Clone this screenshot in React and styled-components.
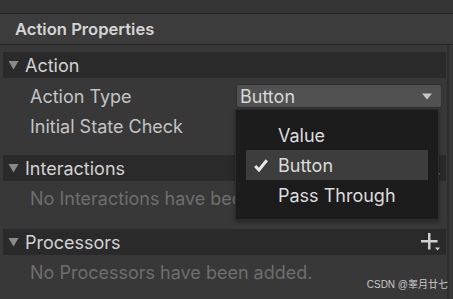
import React from 'react';
import styled, { createGlobalStyle } from 'styled-components';

const GlobalStyle = createGlobalStyle`
  html, body {
    margin: 0;
    padding: 0;
    background: #383838;
    width: 453px;
    height: 299px;
    overflow: hidden;
  }
  body {
    font-family: Inter, "Noto Sans", sans-serif;
  }
`

const Page = styled.div`
  position: relative;
  width: 453px;
  height: 299px;
  background: #383838;
  overflow: hidden;
`

const TopStrip = styled.div`
  height: 13px;
  background: #353535;
  border-bottom: 1px solid #232323;
`

const Title = styled.div`
  height: 30px;
  display: flex;
  align-items: center;
  padding-left: 15px;
  background: #3c3c3c;
  border-bottom: 1px solid #242424;
  color: #d4d4d4;
  font-size: 16.6px;
  font-weight: 600;
`

const Body = styled.div`
  display: flex;
  flex-direction: column;
  padding: 7px 0 0 3px;
  margin-right: 4px;
  border-right: 2px solid #2e2e2e;
  height: 260px;
  box-sizing: border-box;
`

const Foldout = styled.div`
  display: flex;
  flex-direction: column;
  margin-top: ${p => p.$gap || 0}px;
`

const FoldHeader = styled.div`
  height: 26px;
  width: 443px;
  display: flex;
  align-items: center;
  gap: 6px;
  padding-left: 5px;
  box-sizing: border-box;
  background: #2a2a2a;
  color: #d2d2d2;
  font-size: 18px;
`

const HeaderLabel = styled.span`
  flex: 1;
`

const Row = styled.div`
  height: 30px;
  display: flex;
  align-items: center;
  padding-left: 27px;
  color: #c4c4c4;
  font-size: 18px;
`

const Rows = styled.div`
  display: flex;
  flex-direction: column;
  padding-top: 3px;
`

const Label = styled.span`
  width: 206px;
`

const Empty = styled.div`
  height: 30px;
  margin-top: 2px;
  display: flex;
  align-items: center;
  padding-left: 27px;
  color: #6e6e6e;
  font-size: 18px;
`

const Field = styled.div`
  width: 206px;
  height: 24px;
  display: flex;
  align-items: center;
  justify-content: space-between;
  padding: 0 9px 0 3px;
  box-sizing: border-box;
  background: #515151;
  border: 1px solid #303030;
  border-radius: 3px;
  color: #d8d8d8;
  font-size: 18px;
`

const StubField = styled.div`
  width: 3px;
  height: 24px;
  background: #474747;
`

const AddButton = styled.div`
  position: relative;
  width: 20px;
  height: 20px;
  margin-right: 6px;
`

const Menu = styled.div`
  position: absolute;
  left: 235px;
  top: 109px;
  width: 204px;
  height: 111px;
  box-sizing: border-box;
  padding: 10px 10px 0 10px;
  background: #1c1c1c;
  border: 1px solid #2c2c2c;
  box-shadow: 0 2px 4px rgba(0, 0, 0, 0.35);
`

const MenuItem = styled.div`
  height: 30px;
  display: flex;
  align-items: center;
  padding-left: 8px;
  gap: 10px;
  background: ${p => (p.$selected ? '#3d3d3d' : 'transparent')};
  color: #dcdcdc;
  font-size: 18px;
`

const Check = styled.span`
  width: 14px;
  display: flex;
  align-items: center;
`

const Watermark = styled.div`
  position: absolute;
  right: 5px;
  bottom: 8px;
  color: #c9c9c9;
  font-size: 10px;
  font-family: "Liberation Sans", "Noto Sans CJK SC", sans-serif;
`

const Triangle = () => (
  <svg width="11" height="10" viewBox="0 0 11 10">
    <path d="M0.5 1 L10.5 1 L5.5 9.5 Z" fill="#8a8a8a" />
  </svg>
)

const Arrow = () => (
  <svg width="10" height="7" viewBox="0 0 10 7">
    <path d="M0 0.5 L10 0.5 L5 6.5 Z" fill="#c8c8c8" />
  </svg>
)

const Plus = () => (
  <AddButton>
    <svg width="20" height="20" viewBox="0 0 20 20">
      <path d="M8 1 H10.5 V8 H17.5 V10.5 H10.5 V17.5 H8 V10.5 H1 V8 H8 Z" fill="#cfcfcf" />
      <path d="M15 15.5 H20 L17.5 18.5 Z" fill="#cfcfcf" />
    </svg>
  </AddButton>
)

const Tick = () => (
  <svg width="14" height="13" viewBox="0 0 14 13">
    <path d="M1.2 7 L5 11 L12.8 1.2" fill="none" stroke="#e8e8e8" strokeWidth="3" />
  </svg>
)

const App = () => {
  const options = ['Value', 'Button', 'Pass Through'];
  return (
    <Page>
      <GlobalStyle />
      <TopStrip />
      <Title>Action Properties</Title>
      <Body>
        <Foldout>
          <FoldHeader>
            <Triangle />
            <HeaderLabel>Action</HeaderLabel>
          </FoldHeader>
          <Rows>
            <Row>
              <Label>Action Type</Label>
              <Field>
                <span>Button</span>
                <Arrow />
              </Field>
            </Row>
            <Row>
              <Label>Initial State Check</Label>
              <StubField />
            </Row>
          </Rows>
        </Foldout>
        <Foldout $gap={14}>
          <FoldHeader>
            <Triangle />
            <HeaderLabel>Interactions</HeaderLabel>
            <Plus />
          </FoldHeader>
          <Empty>No Interactions have been added.</Empty>
        </Foldout>
        <Foldout $gap={16}>
          <FoldHeader>
            <Triangle />
            <HeaderLabel>Processors</HeaderLabel>
            <Plus />
          </FoldHeader>
          <Empty>No Processors have been added.</Empty>
        </Foldout>
      </Body>
      <Menu>
        {options.map(o => (
          <MenuItem key={o} $selected={o === 'Button'}>
            <Check>{o === 'Button' && <Tick />}</Check>
            <span>{o}</span>
          </MenuItem>
        ))}
      </Menu>
      <Watermark>CSDN @睾月廿七</Watermark>
    </Page>
  );
}

export default App;
